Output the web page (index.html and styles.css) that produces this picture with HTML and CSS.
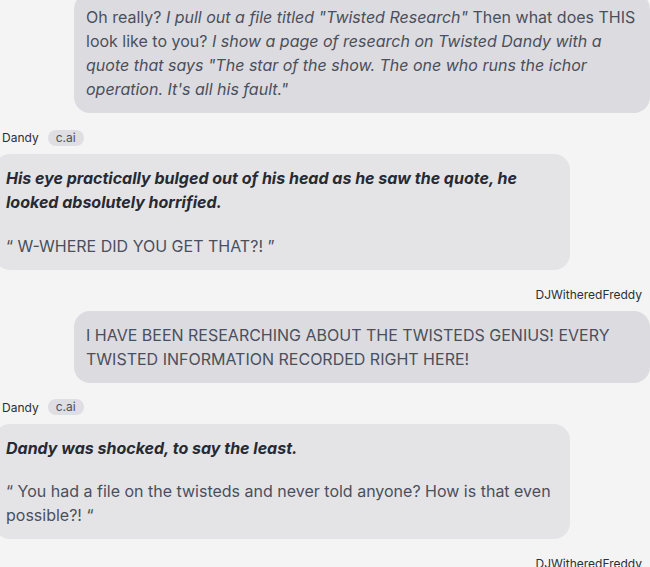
FILE: index.html
```html
<!DOCTYPE html>
<html lang="en">
<head>
<meta charset="utf-8">
<title>Chat</title>
<link rel="stylesheet" href="styles.css">
</head>
<body>
<main class="chat">
  <div class="msg msg-user">
    <div class="bubble bubble-user">
      <p>Oh really? <em>I pull out a file titled "Twisted Research"</em> Then what does THIS look like to you? <em>I show a page of research on Twisted Dandy with a quote that says "The star of the show. The one who runs the ichor operation. It's all his fault."</em></p>
    </div>
  </div>

  <div class="msg msg-ai">
    <div class="label"><span class="name">Dandy</span><span class="tag">c.ai</span></div>
    <div class="bubble bubble-ai">
      <p><strong><em>His eye practically bulged out of his head as he saw the quote, he looked absolutely horrified.</em></strong></p>
      <p>“ W-WHERE DID YOU GET THAT?! ”</p>
    </div>
  </div>

  <div class="msg msg-user">
    <div class="label"><span class="name">DJWitheredFreddy</span></div>
    <div class="bubble bubble-user">
      <p>I HAVE BEEN RESEARCHING ABOUT THE TWISTEDS GENIUS! EVERY TWISTED INFORMATION RECORDED RIGHT HERE!</p>
    </div>
  </div>

  <div class="msg msg-ai">
    <div class="label"><span class="name">Dandy</span><span class="tag">c.ai</span></div>
    <div class="bubble bubble-ai">
      <p><strong><em>Dandy was shocked, to say the least.</em></strong></p>
      <p>“ You had a file on the twisteds and never told anyone? How is that even possible?! “</p>
    </div>
  </div>

  <div class="msg msg-user">
    <div class="label"><span class="name">DJWitheredFreddy</span></div>
  </div>
</main>
</body>
</html>
```

FILE: styles.css
```css
* { box-sizing: border-box; }

html, body {
  margin: 0;
  padding: 0;
  background: #f4f4f5;
  overflow: hidden;
}

body {
  font-family: Inter, "Noto Sans", sans-serif;
  color: #4a4f5c;
  height: 567px;
}

.chat {
  width: 656px;
  margin-left: -6px;
  margin-top: -7px;
  display: flex;
  flex-direction: column;
  gap: 16px;
}

.msg {
  display: flex;
  flex-direction: column;
  gap: 8px;
}

.msg-user { align-items: flex-end; }
.msg-ai { align-items: flex-start; }

.label {
  height: 17px;
  display: flex;
  align-items: center;
  gap: 9px;
  padding: 0 8px;
  font-size: 12px;
  color: #2c2f36;
}

.tag {
  background: #dedee3;
  color: #4a4f5c;
  border-radius: 8px;
  height: 16px;
  line-height: 16px;
  padding: 0 8px;
  font-size: 12px;
}

.bubble {
  width: 576px;
  padding: 12px;
  border-radius: 16px;
  font-size: 16px;
  line-height: 24px;
}

.bubble-user { background: #dcdce0; }
.bubble-ai { background: #e4e4e7; }

.bubble p { margin: 0; }
.bubble p + p { margin-top: 19.5px; }

.bubble strong {
  font-weight: 700;
  color: #272a32;
}
```
